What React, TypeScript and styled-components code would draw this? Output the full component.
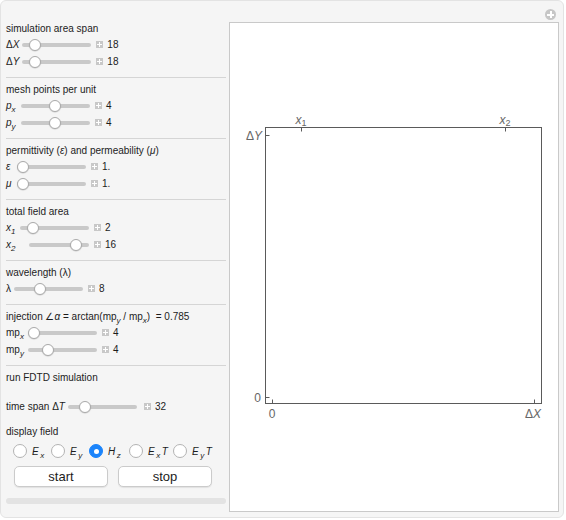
import React from "react"
import styled, { createGlobalStyle } from "styled-components"

const GlobalStyle = createGlobalStyle`
  html, body {
    margin: 0;
    padding: 0;
    background: #ffffff;
  }
  body {
    font-family: "Liberation Sans", Arial, sans-serif;
    color: #1c1c1c;
  }
`

const Panel = styled.div`
  position: relative;
  box-sizing: border-box;
  width: 564px;
  height: 518px;
  padding: 21px 0 0 5px;
  background: #f5f5f5;
  border: 1px solid #e3e3e3;
  border-radius: 6px;
  display: grid;
  grid-template-columns: 223px 330px;
  align-items: start;
`

const CornerButton = styled.div`
  position: absolute;
  top: 8px;
  left: 544px;
  width: 11px;
  height: 11px;
  border-radius: 50%;
  background: #c6c6c6;
  &::before,
  &::after {
    content: "";
    position: absolute;
    background: #ffffff;
  }
  &::before {
    left: 2px;
    top: 4.5px;
    width: 7px;
    height: 2px;
  }
  &::after {
    left: 4.5px;
    top: 2px;
    width: 2px;
    height: 7px;
  }
`

const Controls = styled.div`
  width: 220px;
  display: flex;
  flex-direction: column;
  font-size: 10px;
`

const Title = styled.div<{ $top?: number }>`
  height: 14px;
  line-height: 14px;
  font-size: 10px;
  margin-top: ${({ $top }) => $top ?? 0}px;
  white-space: nowrap;
`

const Separator = styled.div`
  height: 1px;
  background: #d5d5d5;
  margin: 7px 0 5px;
`

const Row = styled.div<{ $top?: number }>`
  display: flex;
  align-items: center;
  height: 17px;
  margin-top: ${({ $top }) => $top ?? 0}px;
  font-size: 10px;
`

const Label = styled.span<{ $w: number }>`
  min-width: ${({ $w }) => $w}px;
  flex: none;
  white-space: nowrap;
  font-size: 10px;
`

const M = styled.i`
  font-style: italic;
`

const Sub = styled.sub`
  font-size: 8px;
  vertical-align: -3px;
  line-height: 0;
`

const Track = styled.div<{ $w: number; $shift: number }>`
  position: relative;
  flex: none;
  width: ${({ $w }) => $w}px;
  height: 4px;
  margin-left: ${({ $shift }) => 3 + $shift}px;
  background: #c9c9c9;
  border-radius: 2px;
`

const Thumb = styled.div<{ $at: number }>`
  position: absolute;
  top: -4px;
  left: ${({ $at }) => $at - 6}px;
  box-sizing: border-box;
  width: 12px;
  height: 12px;
  border-radius: 50%;
  background: #ffffff;
  border: 1px solid #aaaaaa;
  box-shadow: 0 0.5px 1px rgba(0, 0, 0, 0.18);
`

const PlusBox = styled.div<{ $gap: number }>`
  position: relative;
  flex: none;
  width: 7px;
  height: 7px;
  margin-left: ${({ $gap }) => $gap}px;
  background: #c8c8c8;
  &::before,
  &::after {
    content: "";
    position: absolute;
    background: #ffffff;
  }
  &::before {
    left: 1px;
    top: 3px;
    width: 5px;
    height: 1px;
  }
  &::after {
    left: 3px;
    top: 1px;
    width: 1px;
    height: 5px;
  }
`

const Value = styled.span`
  margin-left: 4px;
  font-size: 10px;
`

const RadioRow = styled.div`
  display: flex;
  align-items: center;
  height: 16px;
  margin-top: 4px;
  padding-left: 7px;
`

const RadioItem = styled.div<{ $w: number }>`
  display: flex;
  align-items: center;
  width: ${({ $w }) => $w}px;
  flex: none;
`

const RadioDot = styled.div<{ $on?: boolean }>`
  box-sizing: border-box;
  width: 14px;
  height: 14px;
  border-radius: 50%;
  flex: none;
  background: ${({ $on }) => ($on ? "#1b84fb" : "#ffffff")};
  border: 1px solid ${({ $on }) => ($on ? "#1b84fb" : "#b3b3b3")};
  display: flex;
  align-items: center;
  justify-content: center;
  &::after {
    content: "";
    display: ${({ $on }) => ($on ? "block" : "none")};
    width: 5px;
    height: 5px;
    border-radius: 50%;
    background: #ffffff;
  }
`

const RadioText = styled.span`
  margin-left: 5px;
  font-size: 10px;
  font-style: italic;
  letter-spacing: 1.5px;
  white-space: nowrap;
`

const Buttons = styled.div`
  display: flex;
  gap: 10px;
  margin-top: 7px;
  padding-left: 8px;
`

const Button = styled.button`
  box-sizing: border-box;
  width: 94px;
  height: 21px;
  padding: 0;
  background: #ffffff;
  border: 1px solid #cbcbcb;
  border-radius: 5px;
  box-shadow: 0 1px 1px rgba(0, 0, 0, 0.08);
  font-family: "Liberation Sans", Arial, sans-serif;
  font-size: 13px;
  color: #1c1c1c;
`

const Progress = styled.div`
  height: 6px;
  margin-top: 11px;
  background: #e3e3e3;
  border-radius: 3px;
`

const PlotBox = styled.div`
  box-sizing: border-box;
  width: 330px;
  height: 490px;
  background: #ffffff;
  border: 1px solid #c9c9c9;
`

type SliderProps = {
  label: React.ReactNode
  labelW: number
  at: number
  value: string
  top?: number
  trackW?: number
  shift?: number
  gap?: number
}

function Slider({ label, labelW, at, value, top, trackW = 69, shift = 0, gap = 5 }: SliderProps) {
  return (
    <Row $top={top}>
      <Label $w={labelW}>{label}</Label>
      <Track $w={trackW} $shift={shift}>
        <Thumb $at={at} />
      </Track>
      <PlusBox $gap={gap} />
      <Value>{value}</Value>
    </Row>
  )
}

function Plot() {
  const ink = "#5a5a5a"
  const text = "#666666"
  return (
    <svg width="328" height="488" viewBox="0 0 328 488">
      <rect x="35.5" y="104.5" width="276" height="276" fill="none" stroke={ink} strokeWidth="1" />
      <line x1="71.5" y1="104.5" x2="71.5" y2="108.5" stroke={ink} />
      <line x1="275.5" y1="104.5" x2="275.5" y2="108.5" stroke={ink} />
      <line x1="35.5" y1="112.5" x2="39.5" y2="112.5" stroke={ink} />
      <line x1="35.5" y1="374.5" x2="39.5" y2="374.5" stroke={ink} />
      <line x1="42.5" y1="380.5" x2="42.5" y2="376.5" stroke={ink} />
      <line x1="304.5" y1="380.5" x2="304.5" y2="376.5" stroke={ink} />
      <g fill={text} fontFamily="Liberation Sans, Arial, sans-serif" fontSize="12">
        <text x="71" y="101" textAnchor="middle" fontStyle="italic">
          x<tspan fontSize="9" dy="2" fontStyle="normal">1</tspan>
        </text>
        <text x="275" y="101" textAnchor="middle" fontStyle="italic">
          x<tspan fontSize="9" dy="2" fontStyle="normal">2</tspan>
        </text>
        <text x="32" y="117" textAnchor="end">
          Δ<tspan fontStyle="italic">Y</tspan>
        </text>
        <text x="31" y="379" textAnchor="end">0</text>
        <text x="42" y="395" textAnchor="middle">0</text>
        <text x="303" y="395" textAnchor="middle">
          Δ<tspan fontStyle="italic">X</tspan>
        </text>
      </g>
    </svg>
  )
}

export default function App() {
  return (
    <>
      <GlobalStyle />
      <Panel>
        <CornerButton />
        <Controls>
          <Title>simulation area span</Title>
          <Slider label={<>Δ<M>X</M></>} labelW={13} at={13} value="18" />
          <Slider label={<>Δ<M>Y</M></>} labelW={13} at={13} value="18" />
          <Separator />

          <Title>mesh points per unit</Title>
          <Slider label={<M>p<Sub>x</Sub></M>} labelW={12} at={34} value="4" />
          <Slider label={<M>p<Sub>y</Sub></M>} labelW={12} at={34} value="4" />
          <Separator />

          <Title>
            permittivity (<M>ε</M>) and permeability (<M>μ</M>)
          </Title>
          <Slider label={<M>ε</M>} labelW={8} at={6} value="1." />
          <Slider label={<M>μ</M>} labelW={8} at={6} value="1." />
          <Separator />

          <Title>total field area</Title>
          <Slider label={<M>x<Sub>1</Sub></M>} labelW={11} at={13} value="2" />
          <Slider label={<M>x<Sub>2</Sub></M>} labelW={11} at={47} value="16" trackW={60} shift={9} />
          <Separator />

          <Title>wavelength (λ)</Title>
          <Slider label="λ" labelW={5} at={26} value="8" />
          <Separator />

          <Title>
            injection ∠<M>α</M> = arctan(mp<Sub><M>y</M></Sub> / mp<Sub><M>x</M></Sub>) &nbsp;= 0.785
          </Title>
          <Slider label={<>mp<Sub><M>x</M></Sub></>} labelW={19} at={6} value="4" />
          <Slider label={<>mp<Sub><M>y</M></Sub></>} labelW={19} at={20} value="4" />
          <Separator />

          <Title>run FDTD simulation</Title>
          <Slider
            top={13}
            label={<>time span Δ<M>T</M></>}
            labelW={58}
            at={17}
            value="32"
            gap={7}
          />

          <Title $top={10}>display field</Title>
          <RadioRow>
            <RadioItem $w={38}>
              <RadioDot />
              <RadioText>E<Sub>x</Sub></RadioText>
            </RadioItem>
            <RadioItem $w={38}>
              <RadioDot />
              <RadioText>E<Sub>y</Sub></RadioText>
            </RadioItem>
            <RadioItem $w={40}>
              <RadioDot $on />
              <RadioText>H<Sub>z</Sub></RadioText>
            </RadioItem>
            <RadioItem $w={44}>
              <RadioDot />
              <RadioText>E<Sub>x</Sub>T</RadioText>
            </RadioItem>
            <RadioItem $w={44}>
              <RadioDot />
              <RadioText>E<Sub>y</Sub>T</RadioText>
            </RadioItem>
          </RadioRow>

          <Buttons>
            <Button>start</Button>
            <Button>stop</Button>
          </Buttons>
          <Progress />
        </Controls>

        <PlotBox>
          <Plot />
        </PlotBox>
      </Panel>
    </>
  )
}
